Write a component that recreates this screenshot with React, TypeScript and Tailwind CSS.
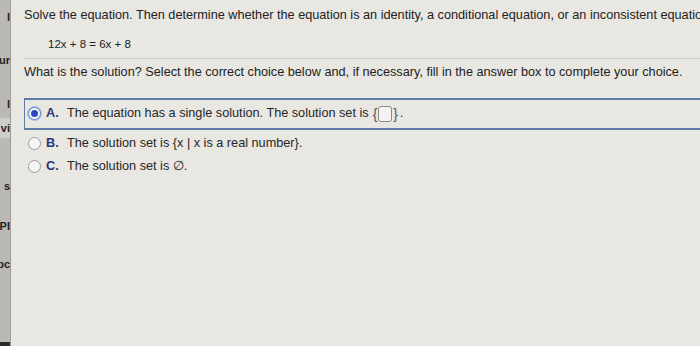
import React from "react";

const font = { fontFamily: '"Liberation Sans", Arial, sans-serif' };

function Radio({ checked }: { checked?: boolean }) {
  return (
    <span
      className={
        "flex h-[13px] w-[13px] shrink-0 items-center justify-center rounded-full border bg-[#f6f6f4] " +
        (checked ? "border-[#5f86c8] shadow-[0_0_0_1px_#a9c0e6]" : "border-[#9a9a9a]")
      }
    >
      {checked && <span className="h-[7px] w-[7px] rounded-full bg-[#2f45c4]" />}
    </span>
  );
}

function Choice({
  letter,
  checked,
  children,
}: {
  letter: string;
  checked?: boolean;
  children: React.ReactNode;
}) {
  return (
    <div className="flex items-center">
      <Radio checked={checked} />
      <span className="ml-[5px] w-[21px] text-[12.7px] font-bold text-[#2c3577]">{letter}</span>
      <span className="text-[12.7px] text-[#262626]">{children}</span>
    </div>
  );
}

export default function App() {
  const side = [
    { t: "", y: "h-[8px]" },
    { t: "l", y: "h-[18px]" },
    { t: "", y: "h-[26px]" },
    { t: "ur", y: "h-[16px]" },
    { t: "", y: "h-[28px]" },
    { t: "I", y: "h-[16px]" },
    { t: "", y: "h-[6px]" },
  ];
  return (
    <div className="flex h-[346px] w-[700px] overflow-hidden bg-[#e9e7e2]" style={font}>
      {/* clipped side panel */}
      <div className="flex w-[11px] shrink-0 flex-col border-r border-[#9e9d99] bg-[#bab9b5] text-[11px] font-bold leading-none text-[#1f1f1f]">
        {side.map((s, i) => (
          <div key={i} className={"flex items-center justify-end overflow-hidden " + s.y}>
            {s.t && <span className="whitespace-nowrap">{s.t}</span>}
          </div>
        ))}
        <div className="flex h-[20px] items-center justify-end overflow-hidden bg-[#cfcecb]">
          <span className="whitespace-nowrap">vi</span>
        </div>
        <div className="h-[40px]" />
        <div className="flex h-[16px] items-center justify-end overflow-hidden">
          <span>s</span>
        </div>
        <div className="h-[24px]" />
        <div className="flex h-[16px] items-center justify-end overflow-hidden">
          <span>PI</span>
        </div>
        <div className="h-[22px]" />
        <div className="flex h-[16px] items-center justify-end overflow-hidden">
          <span>bc</span>
        </div>
        <div className="flex-1" />
        <div className="h-[4px] bg-[#2a2a2a]" />
      </div>

      <div className="flex min-w-0 flex-1 flex-col pl-[13px] text-[#222]">
        <div className="mt-[7px] h-[16px] whitespace-nowrap text-[12.7px] leading-[16px]">
          Solve the equation. Then determine whether the equation is an identity, a conditional equation, or an
          inconsistent equation.
        </div>
        <div className="ml-[24px] mt-[13px] h-[16px] text-[11.5px] leading-[16px]">12x + 8 = 6x + 8</div>
        <div className="mt-[6px] border-t border-[#cfcdc8]" />
        <div className="mt-[5px] h-[16px] whitespace-nowrap text-[12.7px] leading-[16px]">
          What is the solution? Select the correct choice below and, if necessary, fill in the answer box to complete
          your choice.
        </div>

        <div className="mt-[18px] -mr-[4px] flex h-[32px] items-center border-y-2 border-l border-[#5f7ca6] pl-[3px]">
          <Choice letter="A." checked>
            <span className="inline-flex items-center">
              The equation has a single solution. The solution set is
              <span className="ml-[4px] inline-flex items-center text-[#555]">
                <span className="text-[14px] leading-none">{"{"}</span>
                <span className="mx-[1px] h-[16px] w-[14px] rounded-[3px] border border-[#8a8a8a] bg-[#f3f3f1]" />
                <span className="text-[14px] leading-none">{"}"}</span>
              </span>
              <span className="ml-[2px]">.</span>
            </span>
          </Choice>
        </div>

        <div className="mt-[4px] pl-[4px]">
          <Choice letter="B.">The solution set is {"{"}x | x is a real number{"}"}.</Choice>
        </div>
        <div className="mt-[4px] pl-[4px]">
          <Choice letter="C.">The solution set is ∅.</Choice>
        </div>
      </div>
    </div>
  );
}
